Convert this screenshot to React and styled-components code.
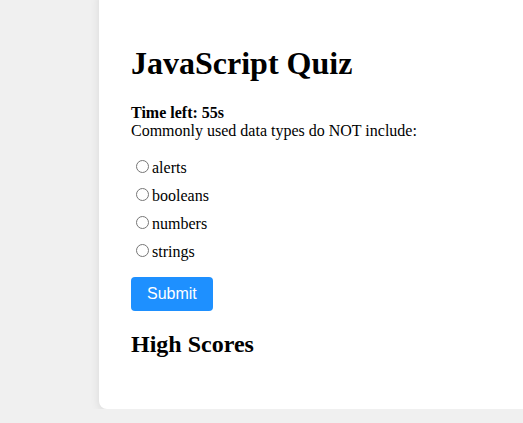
import React, { useState } from 'react';
import styled, { createGlobalStyle } from 'styled-components';

const GlobalStyle = createGlobalStyle`
  html, body {
    margin: 0;
    padding: 0;
    background: #f0f0f0;
    overflow: hidden;
  }
  body {
    font-family: "Liberation Serif", "Times New Roman", serif;
    color: #000;
  }
`;

const Card = styled.div`
  width: 600px;
  margin: -10px 0 0 99px;
  padding: 34px 32px 31px;
  background: #fff;
  border-radius: 8px;
  box-shadow: 0 2px 10px rgba(0, 0, 0, 0.1);
`;

const Title = styled.h1`
  font-size: 32px;
  font-weight: bold;
  margin: 21.44px 0;
`;

const Timer = styled.div`
  font-weight: bold;
  font-size: 16px;
`;

const Question = styled.p`
  margin: 0 0 17px;
  font-size: 16px;
`;

const Option = styled.label`
  display: block;
  margin-bottom: 8px;
  font-size: 16px;

  input {
    margin: 3px 3px 0 5px;
  }
`;

const SubmitButton = styled.button`
  display: block;
  margin-top: 16px;
  padding: 8px 16px;
  background: #1e90ff;
  color: #fff;
  border: none;
  border-radius: 4px;
  font-family: "Liberation Sans", Arial, sans-serif;
  font-size: 16px;
  line-height: 18px;
  cursor: pointer;
`;

const SubTitle = styled.h2`
  font-size: 24px;
  font-weight: bold;
  margin: 19.92px 0;
`;

const options = ['alerts', 'booleans', 'numbers', 'strings'];

export default function App() {
  const [picked, setPicked] = useState(null);

  return (
    <>
      <GlobalStyle />
      <Card>
        <Title>JavaScript Quiz</Title>
        <Timer>Time left: 55s</Timer>
        <Question>Commonly used data types do NOT include:</Question>
        {options.map(opt => (
          <Option key={opt}>
            <input
              type="radio"
              name="answer"
              checked={picked === opt}
              onChange={() => setPicked(opt)}
            />
            {opt}
          </Option>
        ))}
        <SubmitButton>Submit</SubmitButton>
        <SubTitle>High Scores</SubTitle>
      </Card>
    </>
  );
}
